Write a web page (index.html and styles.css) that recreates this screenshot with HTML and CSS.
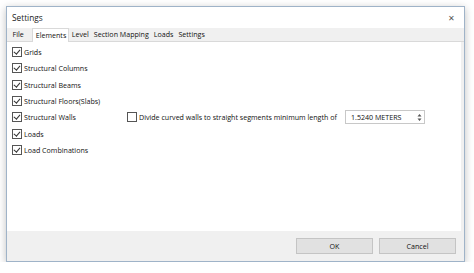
FILE: index.html
```html
<!DOCTYPE html>
<html lang="en">
<head>
    <meta charset="UTF-8">
    <title>Settings</title>
    <link rel="stylesheet" href="styles.css">
</head>
<body>

<div class="window">
    <div class="titlebar">
        <span class="title">Settings</span>
        <span class="close">&#x2715;</span>
    </div>

    <div class="tabs">
        <span class="tab first">File</span>
        <span class="tab active">Elements</span>
        <span class="tab">Level</span>
        <span class="tab">Section Mapping</span>
        <span class="tab">Loads</span>
        <span class="tab">Settings</span>
    </div>

    <div class="panel">
        <label class="row"><span class="box checked"></span>Grids</label>
        <label class="row"><span class="box checked"></span>Structural Columns</label>
        <label class="row"><span class="box checked"></span>Structural Beams</label>
        <label class="row"><span class="box checked"></span>Structural Floors(Slabs)</label>
        <div class="row">
            <label class="walls"><span class="box checked"></span>Structural Walls</label>
            <label class="divide"><span class="box"></span>Divide curved walls to straight segments minimum length of</label>
            <div class="spin">
                <span>1.5240 METERS</span>
                <span class="arrows">
                    <svg width="5" height="9" viewBox="0 0 5 9"><path d="M0.5 3.5 L2.5 1 L4.5 3.5 Z M0.5 5.5 L2.5 8 L4.5 5.5 Z" fill="#555"/></svg>
                </span>
            </div>
        </div>
        <label class="row"><span class="box checked"></span>Loads</label>
        <label class="row"><span class="box checked"></span>Load Combinations</label>
    </div>

    <div class="footer">
        <button class="btn">OK</button>
        <button class="btn">Cancel</button>
    </div>
</div>

</body>
</html>
```

FILE: styles.css
```css
body { margin: 0; background: #fff; font-family: "Open Sans", "Noto Sans", sans-serif; font-size: 7.1px; color: #111; }
.window { margin: 6px 0 0 6px; width: 459px; height: 256px; border: 1px solid #9fb3c8; background: #f0f0f0; box-shadow: 0 2px 8px rgba(0,0,0,0.25); display: flex; flex-direction: column; box-sizing: border-box; }
.titlebar { background: #fff; height: 21px; display: flex; align-items: center; justify-content: space-between; padding: 0 9px 0 5px; font-size: 8.3px; color: #222; }
.close { font-size: 8px; color: #555; }
.tabs { display: flex; align-items: flex-end; height: 13px; padding-left: 3px; border-bottom: 1px solid #d9d9d9; white-space: nowrap; }
.tab { padding: 0 2.5px 1px; height: 11px; line-height: 11px; color: #111; }
.tab.first { padding-right: 8px; }
.tab.active { background: #fff; border: 1px solid #d9d9d9; border-bottom: none; height: 13px; line-height: 13px; margin: 0; padding: 0 2px 0 3px; position: relative; top: 1px; }
.panel { background: #fff; flex: 1; margin: 0 3px 0 0; padding: 2px 0 0 5px; display: flex; flex-direction: column; white-space: nowrap; }
.row { display: flex; align-items: center; height: 16.3px; }
.walls { display: flex; align-items: center; width: 115px; }
.divide { display: flex; align-items: center; width: 218px; }
.box { width: 8px; height: 8px; border: 1px solid #555; margin-right: 2px; position: relative; background: #fff; flex: none; }
.box.checked::after { content: ""; position: absolute; left: 2px; top: 0px; width: 2.5px; height: 5px; border: solid #333; border-width: 0 1px 1px 0; transform: rotate(40deg); }
.spin { width: 80px; height: 14px; border: 1px solid #c8c8c8; display: flex; align-items: center; justify-content: space-between; padding: 0 2px 0 5px; box-sizing: border-box; background: #fff; }
.arrows { display: flex; align-items: center; }
.footer { height: 30px; display: flex; justify-content: flex-end; align-items: center; gap: 6px; padding-right: 8px; }
.btn { width: 77px; height: 16px; border: 1px solid #c4c4c4; background: #e1e1e1; font-family: inherit; font-size: 7.1px; color: #111; padding: 0; }
```
